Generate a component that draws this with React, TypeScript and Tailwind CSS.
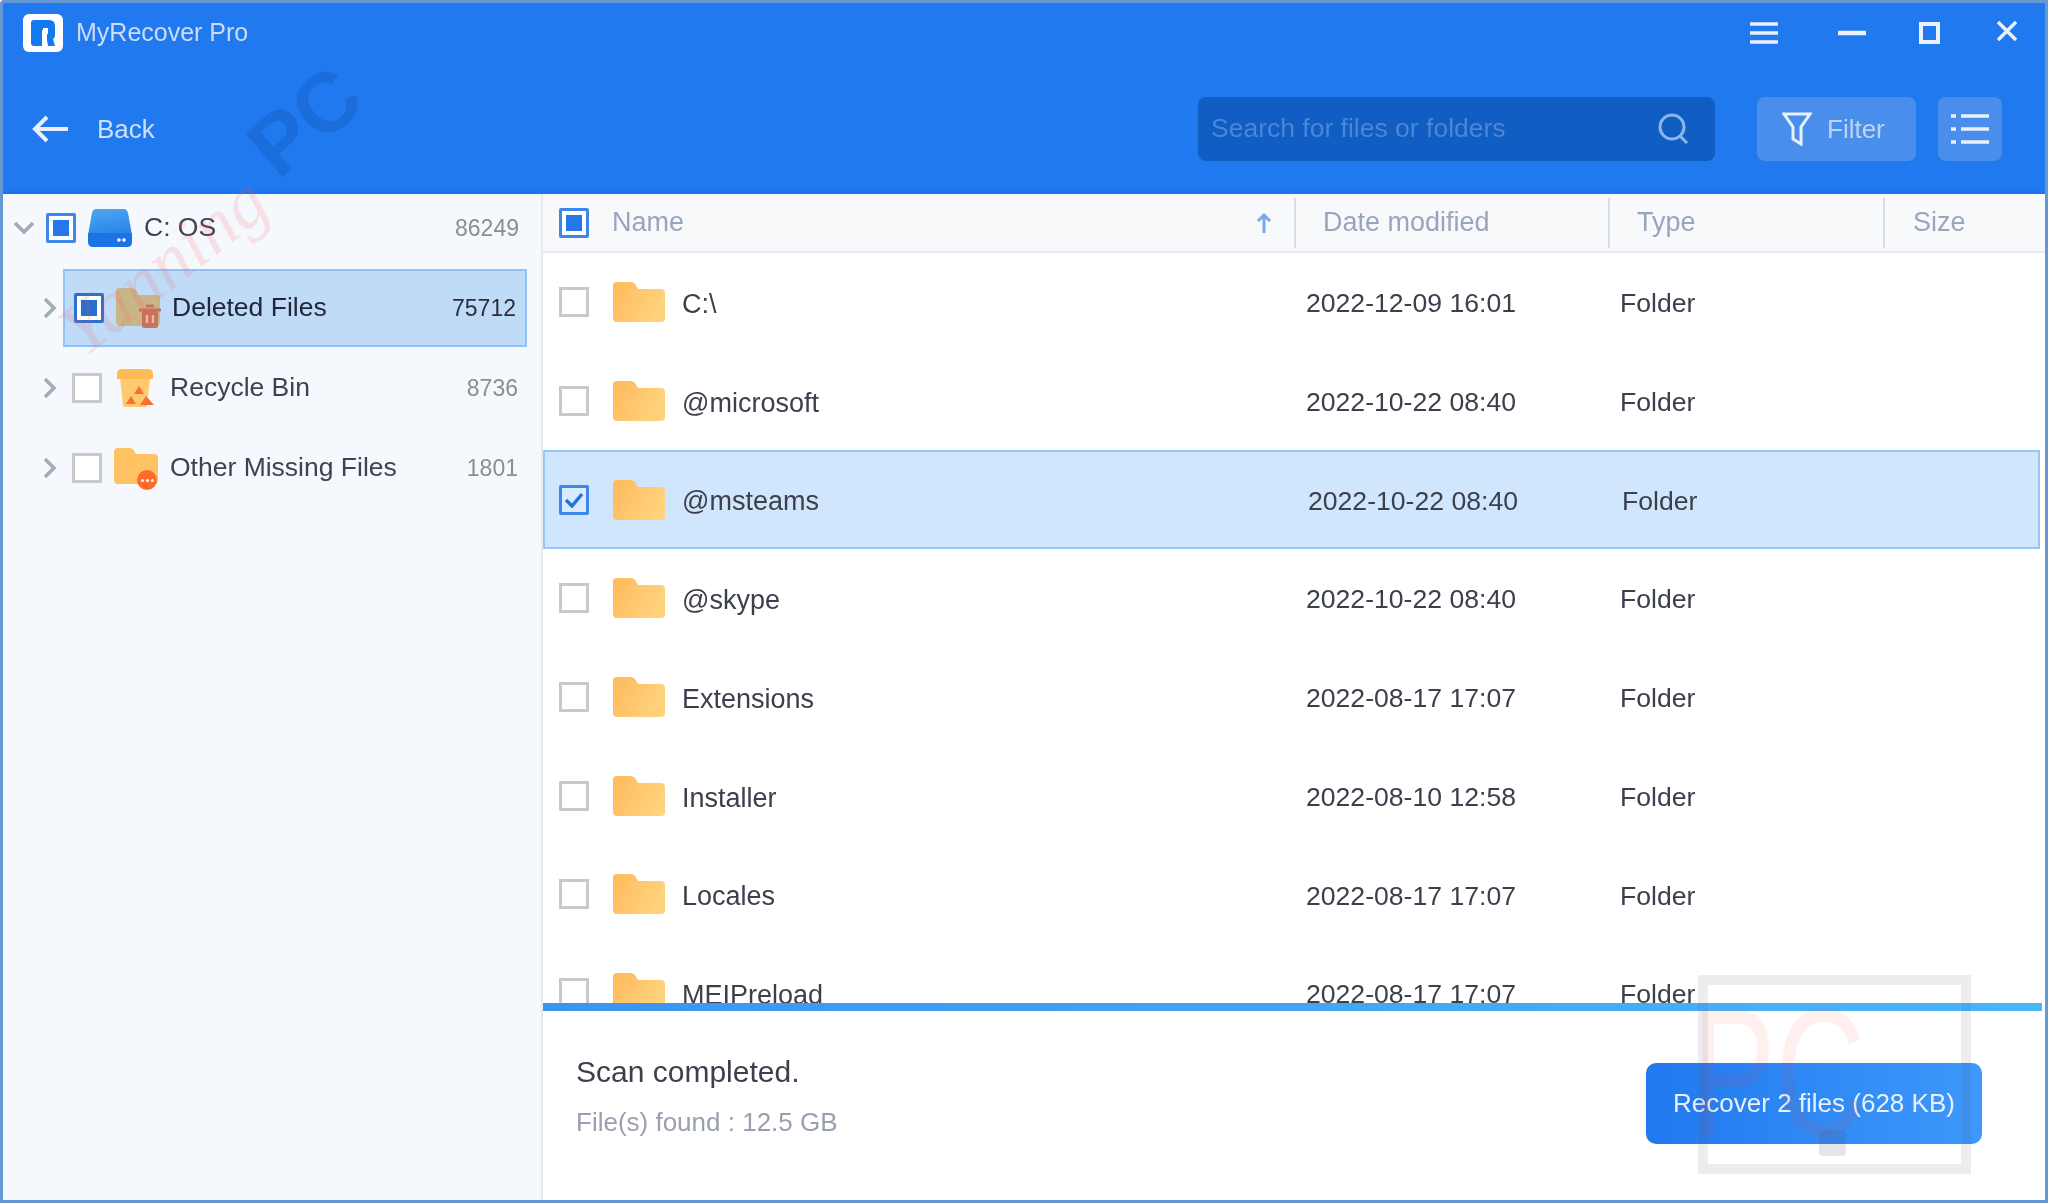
const ROWS = [
  { name: "C:\\", date: "2022-12-09 16:01" },
  { name: "@microsoft", date: "2022-10-22 08:40" },
  { name: "@msteams", date: "2022-10-22 08:40", selected: true },
  { name: "@skype", date: "2022-10-22 08:40" },
  { name: "Extensions", date: "2022-08-17 17:07" },
  { name: "Installer", date: "2022-08-10 12:58" },
  { name: "Locales", date: "2022-08-17 17:07" },
  { name: "MEIPreload", date: "2022-08-17 17:07" },
];

function Checkbox({ state, dark }: { state: "empty" | "mixed" | "checked"; dark?: boolean }) {
  if (state === "empty") {
    return <div className="h-[30px] w-[30px] shrink-0 border-[3px] border-[#c9c9cb] bg-white" />;
  }
  if (state === "checked") {
    return (
      <div className="flex h-[30px] w-[30px] shrink-0 items-center justify-center rounded-[2px] border-[3px] border-[#3d87ea] bg-[#d9ebfd]">
        <svg width="20" height="16" viewBox="0 0 20 16">
          <path d="M2 8l6 6L18 2" fill="none" stroke="#2573dc" strokeWidth="3.5" />
        </svg>
      </div>
    );
  }
  return (
    <div
      className={`h-[30px] w-[30px] shrink-0 rounded-[2px] border-[3px] bg-white p-[4px] ${dark ? "border-[#2a70cf]" : "border-[#3d87ea]"}`}
    >
      <div className={`h-full w-full ${dark ? "bg-[#2a6fcb]" : "bg-[#2478ea]"}`} />
    </div>
  );
}

function Chevron({ down }: { down?: boolean }) {
  if (down) {
    return (
      <svg width="22" height="14" viewBox="0 0 22 14" className="shrink-0">
        <path d="M2 2l9 9 9-9" fill="none" stroke="#a4a9b3" strokeWidth="3.5" />
      </svg>
    );
  }
  return (
    <svg width="14" height="22" viewBox="0 0 14 22" className="shrink-0">
      <path d="M2 2l9 9-9 9" fill="none" stroke="#a4a9b3" strokeWidth="3.5" />
    </svg>
  );
}

function Folder({ tone = "normal" }: { tone?: "normal" | "tan" }) {
  const id = `folder-${tone}`;
  return (
    <svg width="52" height="40" viewBox="0 0 52 40" className="shrink-0">
      <defs>
        <linearGradient id={id} x1="0" y1="0" x2="1" y2="0.4">
          <stop offset="0" stopColor={tone === "tan" ? "#c9b688" : "#ffb95c"} />
          <stop offset="1" stopColor={tone === "tan" ? "#cdbb8e" : "#ffd27c"} />
        </linearGradient>
      </defs>
      <path
        d="M4 0h14q3 0 4.5 2.5L25 7h23q4 0 4 4v25q0 4-4 4H4q-4 0-4-4V4q0-4 4-4z"
        fill={`url(#${id})`}
      />
    </svg>
  );
}

function DriveIcon() {
  return (
    <svg width="44" height="38" viewBox="0 0 44 38" className="shrink-0">
      <defs>
        <linearGradient id="drive" x1="0" y1="0" x2="0.3" y2="1">
          <stop offset="0" stopColor="#4fa8f0" />
          <stop offset="1" stopColor="#2b86ea" />
        </linearGradient>
      </defs>
      <path d="M8 0h28q3 0 4 4l4 22H0L4 4q1-4 4-4z" fill="url(#drive)" />
      <path d="M0 24h44v9q0 5-5 5H5q-5 0-5-5z" fill="#1b74e6" />
      <circle cx="31" cy="31" r="1.8" fill="#fff" />
      <circle cx="36" cy="31" r="1.8" fill="#fff" />
    </svg>
  );
}

function DeletedIcon() {
  return (
    <div className="relative h-[40px] w-[44px] shrink-0">
      <svg width="44" height="38" viewBox="0 0 44 38">
        <path d="M4 0h12q3 0 4 2.5L22 7h18q4 0 4 4v23q0 4-4 4H4q-4 0-4-4V4q0-4 4-4z" fill="#c9b688" />
      </svg>
      <svg width="22" height="24" viewBox="0 0 22 24" className="absolute right-[-1px] bottom-[0px]">
        <path d="M7 2h8M0 6h22" stroke="#c9705f" strokeWidth="3" />
        <path d="M3 7h16v15q0 2-2 2H5q-2 0-2-2z" fill="#c9705f" />
        <path d="M8 11v8M14 11v8" stroke="#eab7a6" strokeWidth="2.5" />
      </svg>
    </div>
  );
}

function RecycleIcon() {
  return (
    <svg width="40" height="38" viewBox="0 0 40 38" className="mx-[2px] shrink-0">
      <path d="M4 9h30l-3 27q0 2-3 2H10q-3 0-3-2z" fill="#ffc970" />
      <path d="M6 0h26q5 0 5 5v5H1V5q0-5 5-5z" fill="#ffbb58" />
      <path d="M23 17l5 8h-10zM15 27l5 8h-10zM30 27l8 9H24z" fill="#ff6f2c" />
    </svg>
  );
}

function MissingIcon() {
  return (
    <div className="relative h-[40px] w-[44px] shrink-0">
      <svg width="44" height="36" viewBox="0 0 44 36">
        <path d="M4 0h12q3 0 4 2.5L22 6h18q4 0 4 4v22q0 4-4 4H4q-4 0-4-4V4q0-4 4-4z" fill="#ffc364" />
      </svg>
      <div className="absolute right-[1px] bottom-[-2px] flex h-[20px] w-[20px] items-center justify-center gap-[2px] rounded-full bg-[#ff6a2b]">
        <span className="h-[3px] w-[3px] rounded-full bg-white" />
        <span className="h-[3px] w-[3px] rounded-full bg-white" />
        <span className="h-[3px] w-[3px] rounded-full bg-white" />
      </div>
    </div>
  );
}

function TitleBar() {
  return (
    <div className="flex h-[60px] items-center pl-[20px] pr-[27px]">
      {/* Logo */}
      <svg width="40" height="38" viewBox="0 0 40 38" className="shrink-0">
        <rect width="40" height="38" rx="6" fill="#fff" />
        <path d="M8 9q0-3 3-3h15q6 0 6 6v9q0 3-2 4l2 7h-7l-1-6v-7q0-3-3-3h-2v16H11q-3 0-3-3z" fill="#1479ef" />
        <path d="M20 14h5v6h-3v13h-2z" fill="#fff" />
      </svg>
      <span className="ml-[13px] text-[25px] text-[#cfdcf8]">MyRecover Pro</span>
      <div className="ml-auto flex items-center">
        <svg width="28" height="24" viewBox="0 0 28 24">
          <path d="M0 3h28M0 12h28M0 21h28" stroke="#eaf1fc" strokeWidth="3.5" />
        </svg>
        <svg width="28" height="6" viewBox="0 0 28 6" className="ml-[60px]">
          <path d="M0 3h28" stroke="#eaf1fc" strokeWidth="4.5" />
        </svg>
        <svg width="21" height="22" viewBox="0 0 21 22" className="ml-[53px]">
          <rect x="2" y="2" width="17" height="18" fill="none" stroke="#eaf1fc" strokeWidth="4" />
        </svg>
        <svg width="22" height="22" viewBox="0 0 22 22" className="ml-[56px] -mt-[4px]">
          <path d="M2 2l18 18M20 2L2 20" stroke="#eaf1fc" strokeWidth="3.5" />
        </svg>
      </div>
    </div>
  );
}

function Toolbar() {
  return (
    <div className="mt-[34px] flex h-[64px] items-center pl-[29px] pr-[43px]">
      <svg width="36" height="28" viewBox="0 0 36 28" className="shrink-0">
        <path d="M36 14H3M15 2L3 14l12 12" fill="none" stroke="#e9eff9" strokeWidth="4" />
      </svg>
      <span className="ml-[29px] text-[26px] text-[#cfe0fa]">Back</span>

      <div className="ml-auto flex h-[64px] w-[517px] items-center justify-between rounded-[8px] bg-[#105dc3] pl-[13px] pr-[24px]">
        <span className="text-[26.5px] text-[#4c86d6]">Search for files or folders</span>
        <svg width="34" height="32" viewBox="0 0 34 32">
          <circle cx="15" cy="14" r="12" fill="none" stroke="#8db4ea" strokeWidth="3" />
          <path d="M23 23l7 7" stroke="#8db4ea" strokeWidth="3" />
        </svg>
      </div>

      <div className="ml-[42px] flex h-[64px] w-[159px] items-center rounded-[8px] bg-[#4a8eeb] pl-[25px]">
        <svg width="30" height="34" viewBox="0 0 30 34">
          <path d="M2 2h26L19 15v17l-8-5V15z" fill="none" stroke="#eaf1fc" strokeWidth="3" />
        </svg>
        <span className="ml-[15px] text-[26px] text-[#bcd4f6]">Filter</span>
      </div>

      <div className="ml-[22px] flex h-[64px] w-[64px] items-center justify-center rounded-[8px] bg-[#4a8eeb]">
        <svg width="38" height="30" viewBox="0 0 38 30">
          <path d="M0 2h5M0 15h5M0 28h5" stroke="#eaf1fc" strokeWidth="3.5" />
          <path d="M10 2h28M10 15h28M10 28h28" stroke="#eaf1fc" strokeWidth="3.5" />
        </svg>
      </div>
    </div>
  );
}

function TreeRow({
  icon,
  label,
  count,
  selected,
  checked,
}: {
  icon: React.ReactNode;
  label: string;
  count: string;
  selected?: boolean;
  checked?: boolean;
}) {
  return (
    <div className="flex h-[80px] items-center pl-[40px]">
      <Chevron />
      <div
        className={`ml-[6px] flex h-[78px] w-[464px] items-center gap-[12px] pl-[9px] pr-[9px] ${selected ? "border-2 border-[#90c2f8] bg-[#bfdbf8]" : ""}`}
      >
        <Checkbox state={checked ? "mixed" : "empty"} dark={selected} />
        {icon}
        <span className={`text-[26.5px] ${selected ? "text-[#22263a]" : "text-[#3f4350]"}`}>{label}</span>
        <span className={`ml-auto text-[23px] ${selected ? "text-[#2c2f3a]" : "text-[#8b8d93]"}`}>{count}</span>
      </div>
    </div>
  );
}

function Sidebar() {
  return (
    <div className="w-[540px] shrink-0 border-r-2 border-[#e6e8f2] bg-[#f5f8fd]">
      <div className="mb-[6px] flex h-[68px] items-center pl-[10px] pr-[22px]">
        <Chevron down />
        <div className="ml-[11px]">
          <Checkbox state="mixed" />
        </div>
        <div className="ml-[12px]">
          <DriveIcon />
        </div>
        <span className="ml-[12px] text-[26.5px] text-[#3f4350]">C: OS</span>
        <span className="ml-auto text-[23px] text-[#8b8d93]">86249</span>
      </div>
      <TreeRow icon={<DeletedIcon />} label="Deleted Files" count="75712" selected checked />
      <TreeRow icon={<RecycleIcon />} label="Recycle Bin" count="8736" />
      <TreeRow icon={<MissingIcon />} label="Other Missing Files" count="1801" />
    </div>
  );
}

function TableHeader() {
  return (
    <div className="flex h-[59px] shrink-0 items-center border-b-2 border-[#e8eaf3] bg-[#f8f9fb] text-[27px] text-[#9aa5bd]">
      <div className="flex w-[751px] shrink-0 items-center pl-[16px] pr-[22px]">
        <Checkbox state="mixed" />
        <span className="ml-[23px]">Name</span>
        <svg width="16" height="22" viewBox="0 0 16 22" className="ml-auto">
          <path d="M8 21V3M2 9l6-6 6 6" fill="none" stroke="#74a9ec" strokeWidth="3" />
        </svg>
      </div>
      <div className="flex h-[50px] w-[314px] shrink-0 items-center border-l-2 border-[#d9dce3] pl-[27px]">Date modified</div>
      <div className="flex h-[50px] w-[275px] shrink-0 items-center border-l-2 border-[#d9dce3] pl-[27px]">Type</div>
      <div className="flex h-[50px] flex-1 items-center border-l-2 border-[#d9dce3] pl-[28px]">Size</div>
    </div>
  );
}

function FileRow({ name, date, selected }: { name: string; date: string; selected?: boolean }) {
  return (
    <div
      className={`flex h-[98.7px] shrink-0 items-center text-[27px] text-[#3c404c] ${selected ? "border-2 border-[#96c7f8] bg-[#cfe6fd]" : ""}`}
    >
      <div className={`flex w-[763px] shrink-0 items-center ${selected ? "pl-[14px]" : "pl-[16px]"}`}>
        <Checkbox state={selected ? "checked" : "empty"} />
        <div className="ml-[24px]">
          <Folder />
        </div>
        <span className="ml-[17px] translate-y-[2px]">{name}</span>
      </div>
      <span className="w-[314px] shrink-0 translate-y-[2px] text-[26.6px]">{date}</span>
      <span className="translate-y-[2px] text-[26.6px]">Folder</span>
    </div>
  );
}

function Footer() {
  return (
    <div className="flex flex-1 items-start justify-between pl-[33px] pr-[63px] pt-[52px]">
      <div className="-mt-[11px] flex flex-col">
        <span className="text-[30px] leading-[40px] text-[#3c404c]">Scan completed.</span>
        <span className="mt-[15px] text-[26px] leading-[30px] text-[#9a9fb0]">File(s) found : 12.5 GB</span>
      </div>
      <div className="flex h-[81px] w-[336px] items-center justify-center rounded-[10px] bg-linear-to-r from-[#2079ef] to-[#3d99fb] text-[26px] text-[#e8f1fd]">
        Recover 2 files (628 KB)
      </div>
    </div>
  );
}

export default function App() {
  return (
    <div className="relative h-[1203px] w-[2048px] overflow-hidden rounded-tl-[4px] border-[3px] border-[#6598d3] bg-white blur-[0.6px] [font-family:'Liberation_Sans',sans-serif]">
      <div className="flex h-full flex-col">
        <div className="h-[191px] shrink-0 border-b-[3px] border-[#1a74ee] bg-[#2079ef]">
          <TitleBar />
          <Toolbar />
        </div>
        <div className="flex min-h-0 flex-1">
          <Sidebar />
          <div className="flex min-w-0 flex-1 flex-col">
            <TableHeader />
            <div className="flex h-[750px] shrink-0 flex-col overflow-hidden pr-[5px]">
              {ROWS.map((r) => (
                <FileRow key={r.name} name={r.name} date={r.date} selected={r.selected} />
              ))}
            </div>
            <div className="mr-[3px] h-[8px] shrink-0 bg-linear-to-r from-[#3d93f1] to-[#4ab6f5]" />
            <Footer />
          </div>
        </div>
      </div>

      {/* Watermarks */}
      <span className="pointer-events-none absolute left-[243px] top-[76px] rotate-[-40deg] text-[84px] font-bold leading-none text-[#1561c8]/50">
        PC
      </span>
      <span className="pointer-events-none absolute left-[40px] top-[225px] rotate-[-38deg] text-[74px] italic leading-none text-[#ff5a5a]/15 [font-family:'Liberation_Serif',serif]">
        Yanning
      </span>
      <div className="pointer-events-none absolute left-[1695px] top-[972px] h-[199px] w-[273px] border-[10px] border-[#50506a]/10">
        <span className="absolute left-[-16px] top-[-5px] origin-top-left scale-x-[0.68] text-[184px] leading-none text-[#ff3030]/8">
          PC
        </span>
        <div className="absolute left-[111px] top-[145px] h-[26px] w-[27px] rounded-[4px] bg-[#50506a]/15" />
      </div>
    </div>
  );
}
